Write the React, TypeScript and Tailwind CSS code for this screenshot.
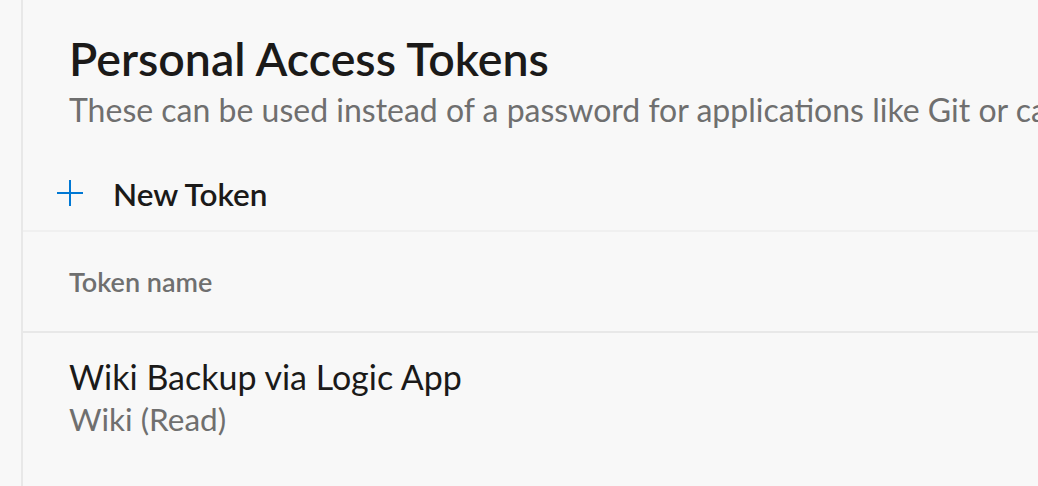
import React from "react";

export default function App() {
  const font = { fontFamily: 'Lato, "Open Sans", sans-serif' };
  return (
    <div className="w-[1038px] h-[486px] bg-[#f8f8f8] flex overflow-hidden" style={font}>
      <div className="w-[21px] shrink-0" />
      <div className="flex-1 border-l-2 border-[#e8e8e8] flex flex-col min-w-0">
        <div className="pl-[46px] pt-[30px] whitespace-nowrap">
          <h1 className="text-[46.5px] leading-[56px] font-semibold text-[#1b1a19]">Personal Access Tokens</h1>
          <p className="mt-[4px] text-[32px] leading-[40px] text-[#6f6f6f]">
            These can be used instead of a password for applications like Git or can be passed in the authorization header to access REST APIs
          </p>
        </div>
        <div className="mt-[25px] h-[77px] flex items-start pl-[34px] border-b-2 border-[#f0f0f0]">
          <svg width="26" height="26" viewBox="0 0 26 26" className="shrink-0 mt-[25px]">
            <path d="M13 0V26M0 13H26" stroke="#0078d4" strokeWidth="2" />
          </svg>
          <span className="ml-[30px] mt-[19px] text-[31.5px] leading-[40px] font-semibold text-[#1b1a19]">New Token</span>
        </div>
        <div className="h-[101px] flex items-start pt-[32px] pl-[46px] border-b-2 border-[#e8e8e8]">
          <span className="text-[27px] leading-[36px] font-semibold text-[#6f6f6f]">Token name</span>
        </div>
        <div className="pl-[46px] pt-[22px] flex flex-col">
          <span className="text-[34px] leading-[44px] text-[#1b1a19]">Wiki Backup via Logic App</span>
          <span className="text-[31.5px] leading-[40px] text-[#6f6f6f]">Wiki (Read)</span>
        </div>
      </div>
    </div>
  );
}
